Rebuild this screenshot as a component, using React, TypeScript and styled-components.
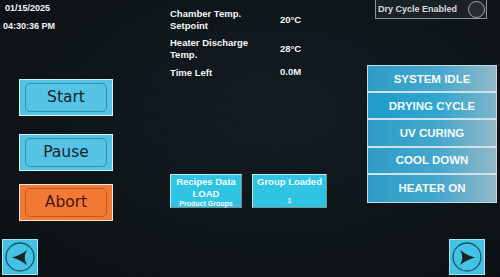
import React from "react";
import styled, { createGlobalStyle } from "styled-components";

const GlobalStyle = createGlobalStyle`
  html, body {
    margin: 0;
    padding: 0;
    background: #0e1519;
  }
  * {
    box-sizing: border-box;
  }
`;

const readings = [
  { label: ["Chamber Temp.", "Setpoint"], value: "20°C" },
  { label: ["Heater Discharge", "Temp."], value: "28°C" },
  { label: ["Time Left"], value: "0.0M" },
];

const statuses = ["SYSTEM IDLE", "DRYING CYCLE", "UV CURING", "COOL DOWN", "HEATER ON"];

function App() {
  return (
    <>
      <GlobalStyle />
      <Screen>
        <Main>
          <LeftCol>
            <Clock>01/15/2025</Clock>
            <Clock $indent={3} $top={7}>
              04:30:36 PM
            </Clock>
            <ControlButton $top={47}>
              <Inner>Start</Inner>
            </ControlButton>
            <ControlButton $top={18}>
              <Inner>Pause</Inner>
            </ControlButton>
            <ControlButton $top={13} $danger>
              <Inner $danger>Abort</Inner>
            </ControlButton>
          </LeftCol>

          <CenterCol>
            <Readings>
              {readings.map((r) => (
                <ReadingRow key={r.value}>
                  <Label>
                    {r.label.map((l) => (
                      <div key={l}>{l}</div>
                    ))}
                  </Label>
                  <Value>{r.value}</Value>
                </ReadingRow>
              ))}
            </Readings>
            <InfoBoxes>
              <InfoBox $width={72}>
                <InfoLine>Recipes Data</InfoLine>
                <InfoLine>LOAD</InfoLine>
                <InfoSmall>Product Groups</InfoSmall>
              </InfoBox>
              <InfoBox $width={75}>
                <InfoLine>Group Loaded</InfoLine>
                <InfoSmall $top={9}>1</InfoSmall>
              </InfoBox>
            </InfoBoxes>
          </CenterCol>

          <RightCol>
            <DryToggle>
              <span>Dry Cycle Enabled</span>
              <ToggleDot />
            </DryToggle>
            <StatusList>
              {statuses.map((s, i) => (
                <StatusRow key={s} $active={i === 1} $last={i === statuses.length - 1}>
                  {s}
                </StatusRow>
              ))}
            </StatusList>
          </RightCol>
        </Main>

        <Footer>
          <NavButton>
            <ArrowIcon dir="left" />
          </NavButton>
          <NavButton>
            <ArrowIcon dir="right" />
          </NavButton>
        </Footer>
      </Screen>
    </>
  );
}

function ArrowIcon({ dir }: { dir: "left" | "right" }) {
  return (
    <svg width="34" height="34" viewBox="0 0 34 34">
      <circle cx="17" cy="17" r="14" fill="none" stroke="#1c5468" strokeWidth="1.3" />
      <g transform={dir === "right" ? "translate(34 0) scale(-1 1)" : undefined}>
        <path d="M24 10 Q17 15.5 9 17.5 Q17 19.5 24 25 Q19.5 17.5 24 10 Z" fill="#1b2329" />
      </g>
    </svg>
  );
}

export default App;

const Screen = styled.div`
  width: 500px;
  height: 277px;
  overflow: hidden;
  display: flex;
  flex-direction: column;
  background: radial-gradient(ellipse at 55% 40%, #131c21 0%, #0f161a 55%, #0a0f12 100%);
  font-family: "Liberation Sans", Arial, sans-serif;
  color: #f4f6f6;
`;

const Main = styled.div`
  height: 239px;
  display: flex;
  flex-direction: row;
`;

const LeftCol = styled.div`
  width: 170px;
  display: flex;
  flex-direction: column;
  padding-top: 3px;
`;

const Clock = styled.div<{ $indent?: number; $top?: number }>`
  font-size: 9px;
  line-height: 11px;
  font-weight: bold;
  padding-left: ${(p) => p.$indent ?? 5}px;
  margin-top: ${(p) => p.$top ?? 0}px;
`;

const ControlButton = styled.div<{ $top: number; $danger?: boolean }>`
  margin-top: ${(p) => p.$top}px;
  margin-left: 19px;
  width: 94px;
  height: 37px;
  padding: 3px 5px;
  background: ${(p) => (p.$danger ? "#f37a35" : "#55c3e4")};
  border: 1.5px solid ${(p) => (p.$danger ? "#f4e6de" : "#d6f1f8")};
  display: flex;
`;

const Inner = styled.div<{ $danger?: boolean }>`
  flex: 1;
  border: 1px solid ${(p) => (p.$danger ? "#c8561c" : "#2f8fb2")};
  border-radius: 5px;
  display: flex;
  align-items: center;
  justify-content: center;
  font-family: "DejaVu Sans", sans-serif;
  font-size: 15.5px;
  color: ${(p) => (p.$danger ? "#4a150a" : "#18252e")};
  padding-bottom: 1px;
`;

const CenterCol = styled.div`
  width: 197px;
  display: flex;
  flex-direction: column;
  padding-top: 8px;
`;

const Readings = styled.div`
  display: flex;
  flex-direction: column;
  gap: 5px;
`;

const ReadingRow = styled.div`
  display: grid;
  grid-template-columns: 110px 1fr;
  align-items: center;
  font-size: 9.5px;
  line-height: 12px;
  font-weight: bold;
`;

const Label = styled.div``;

const Value = styled.div`
  padding-bottom: 1px;
`;

const InfoBoxes = styled.div`
  margin-top: 95px;
  display: flex;
  gap: 10px;
`;

const InfoBox = styled.div<{ $width: number }>`
  width: ${(p) => p.$width}px;
  height: 34px;
  background: #2fc4e4;
  border-top: 1px solid #bfeaf4;
  border-left: 1px solid #bfeaf4;
  border-right: 1.5px solid #7b8f96;
  border-bottom: 1.5px solid #7b8f96;
  display: flex;
  flex-direction: column;
  align-items: center;
  padding-top: 1px;
  color: #f4fbfd;
`;

const InfoLine = styled.div`
  font-size: 9.5px;
  line-height: 12px;
  font-weight: bold;
`;

const InfoSmall = styled.div<{ $top?: number }>`
  margin-top: ${(p) => p.$top ?? 0}px;
  font-size: 7px;
  line-height: 8px;
  font-weight: bold;
`;

const RightCol = styled.div`
  width: 133px;
  display: flex;
  flex-direction: column;
`;

const DryToggle = styled.div`
  margin-left: 8px;
  width: 112px;
  height: 19px;
  border: 1.5px solid #8e959a;
  border-top: none;
  background: #1b2226;
  display: flex;
  align-items: center;
  justify-content: space-between;
  padding: 0 1px 0 2px;
  font-size: 9px;
  font-weight: bold;
  color: #d9dcde;
`;

const ToggleDot = styled.div`
  width: 17px;
  height: 17px;
  border-radius: 50%;
  border: 1.5px solid #a3a7aa;
  background: #262c30;
`;

const StatusList = styled.div`
  margin-top: 46px;
  width: 130px;
  border: 1.5px solid #c4d9e2;
  display: flex;
  flex-direction: column;
`;

const StatusRow = styled.div<{ $active?: boolean; $last?: boolean }>`
  height: 27.2px;
  display: flex;
  align-items: center;
  justify-content: center;
  background: ${(p) =>
    p.$active
      ? "linear-gradient(90deg, #1f9cca 0%, #30a6d0 55%, #7fb4c8 100%)"
      : "linear-gradient(90deg, #2d9cc5 0%, #45a8cd 55%, #93b8c7 100%)"};
  border-bottom: ${(p) => (p.$last ? "none" : "2px solid #cde2ea")};
  font-size: 11.5px;
  font-weight: bold;
  color: #f5fafc;
`;

const Footer = styled.div`
  flex: 1;
  display: flex;
  justify-content: space-between;
  align-items: flex-start;
  padding: 0 15px 0 2px;
`;

const NavButton = styled.div`
  width: 36px;
  height: 36px;
  background: #44c2e3;
  border: 1px solid #a9e2f0;
  display: flex;
  align-items: center;
  justify-content: center;
`;
